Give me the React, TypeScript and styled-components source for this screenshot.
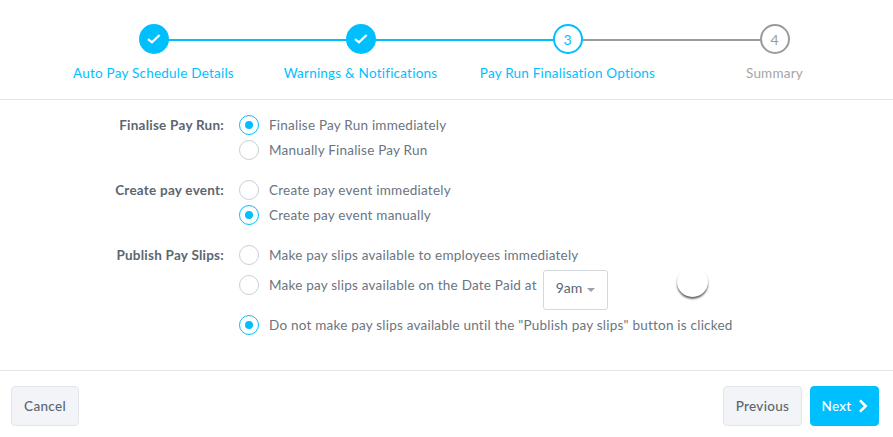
import React from 'react';
import styled, { createGlobalStyle } from 'styled-components';

const GlobalStyle = createGlobalStyle`
	html, body {
		margin: 0;
		padding: 0;
		background: #fff;
	}
	body {
		font-family: 'Lato', 'Liberation Sans', sans-serif;
		color: #6b7580;
	}
`;

const Page = styled.div`
	width: 893px;
	height: 437px;
	display: flex;
	flex-direction: column;
	overflow: hidden;
`;

const Stepper = styled.div`
	height: 100px;
	padding: 24px 0 0 50px;
	box-sizing: border-box;
	display: grid;
	grid-template-columns: repeat(4, 207px);
	border-bottom: 1px solid #e4e4e4;
`;

const Step = styled.div`
	position: relative;
	display: flex;
	flex-direction: column;
	align-items: center;
`;

const Connector = styled.div<{ $color: string }>`
	position: absolute;
	top: 15px;
	left: 50%;
	width: 100%;
	height: 2px;
	background: ${(props) => props.$color};
`;

const Circle = styled.div<{ $color: string; $filled?: boolean }>`
	position: relative;
	width: 30px;
	height: 30px;
	box-sizing: border-box;
	border-radius: 50%;
	border: 2px solid ${(props) => props.$color};
	background: ${(props) => (props.$filled ? props.$color : '#fff')};
	color: ${(props) => props.$color};
	display: flex;
	align-items: center;
	justify-content: center;
	font-size: 14px;
`;

const StepLabel = styled.div<{ $color: string }>`
	margin-top: 11px;
	font-size: 13.5px;
	line-height: 16px;
	letter-spacing: 0.22px;
	white-space: nowrap;
	color: ${(props) => props.$color};
`;

const Form = styled.div`
	flex: 1;
	padding-top: 12.5px;
	display: flex;
	flex-direction: column;
	gap: 15px;
`;

const Group = styled.div`
	display: grid;
	grid-template-columns: 224px 1fr;
	column-gap: 15px;
`;

const GroupLabel = styled.div`
	text-align: right;
	font-size: 13.5px;
	line-height: 25px;
	font-weight: 700;
	letter-spacing: 0.24px;
	color: #5c6670;
	white-space: nowrap;
`;

const Options = styled.div`
	display: flex;
	flex-direction: column;
`;

const Option = styled.div<{ $height?: number; $below?: number }>`
	position: relative;
	height: ${(props) => props.$height ?? 25}px;
	margin-bottom: ${(props) => props.$below ?? 0}px;
	display: flex;
	align-items: center;
	font-size: 13.5px;
	letter-spacing: 0.22px;
	color: #6b7580;
	white-space: nowrap;
`;

const Radio = styled.span<{ $checked?: boolean }>`
	width: 20px;
	height: 20px;
	box-sizing: border-box;
	flex: none;
	margin-right: 10px;
	border-radius: 50%;
	border: 1px solid ${(props) => (props.$checked ? '#00bfff' : '#c8d0d8')};
	display: flex;
	align-items: center;
	justify-content: center;
	&::after {
		content: '';
		display: ${(props) => (props.$checked ? 'block' : 'none')};
		width: 8px;
		height: 8px;
		border-radius: 50%;
		background: #00bfff;
	}
`;

const TimeSelect = styled.div`
	width: 65px;
	height: 40px;
	box-sizing: border-box;
	margin: 10px 0 0 6px;
	padding: 0 0 5px 12px;
	border: 1px solid #d5d9dd;
	border-radius: 3px;
	display: flex;
	align-items: center;
	gap: 5px;
	color: #5c6670;
	letter-spacing: 0;
	font-size: 14px;
`;

const Caret = styled.span`
	width: 0;
	height: 0;
	margin-top: 5px;
	border-left: 4px solid transparent;
	border-right: 4px solid transparent;
	border-top: 4px solid #9aa2aa;
`;

const Knob = styled.div`
	position: absolute;
	left: 438px;
	top: -1px;
	width: 31px;
	height: 30px;
	border-radius: 50%;
	background: #fff;
	box-shadow: 0 2px 2px rgba(0, 0, 0, 0.6);
`;

const Footer = styled.div`
	height: 67px;
	box-sizing: border-box;
	padding: 15px 14px 0 11px;
	border-top: 1px solid #e4e4e4;
	display: flex;
	align-items: flex-start;
	gap: 8px;
`;

const Spacer = styled.div`
	flex: 1;
`;

const Button = styled.button<{ $primary?: boolean; $width: number }>`
	width: ${(props) => props.$width}px;
	height: 40px;
	padding: 0;
	box-sizing: border-box;
	border-radius: 4px;
	border: 1px solid ${(props) => (props.$primary ? '#00bfff' : '#e2e5ea')};
	background: ${(props) => (props.$primary ? '#00bfff' : '#f2f4f8')};
	color: ${(props) => (props.$primary ? '#fff' : '#5c6670')};
	font-family: inherit;
	font-size: 13.5px;
	letter-spacing: 0.3px;
	font-weight: 500;
	display: flex;
	align-items: center;
	justify-content: center;
	gap: 6px;
`;

const Check = () => (
	<svg width="16" height="16" viewBox="0 0 16 16" fill="none">
		<path d="M2 8.2 L6 11.4 L13.6 4" stroke="#fff" strokeWidth="2.2" />
	</svg>
);

const Chevron = () => (
	<svg width="10" height="14" viewBox="0 0 10 14" fill="none">
		<path d="M2 1.3 L7.7 7 L2 12.7" stroke="#fff" strokeWidth="2.6" />
	</svg>
);

const BLUE = '#00bfff';
const GREY = '#9b9b9b';

const steps = [
	{ label: 'Auto Pay Schedule Details', done: true, active: true, next: BLUE },
	{ label: 'Warnings & Notifications', done: true, active: true, next: BLUE },
	{ label: 'Pay Run Finalisation Options', number: 3, active: true, next: GREY },
	{ label: 'Summary', number: 4, active: false },
];

const App: React.FC = () => {
	return (
		<Page>
			<GlobalStyle />
			<Stepper>
				{steps.map((step) => {
					const color = step.active ? BLUE : GREY;
					return (
						<Step key={step.label}>
							{step.next && <Connector $color={step.next} />}
							<Circle $color={color} $filled={step.done}>
								{step.done ? <Check /> : step.number}
							</Circle>
							<StepLabel $color={step.active ? BLUE : '#a5a5a5'}>{step.label}</StepLabel>
						</Step>
					);
				})}
			</Stepper>
			<Form>
				<Group>
					<GroupLabel>Finalise Pay Run:</GroupLabel>
					<Options>
						<Option>
							<Radio $checked />
							Finalise Pay Run immediately
						</Option>
						<Option>
							<Radio />
							Manually Finalise Pay Run
						</Option>
					</Options>
				</Group>
				<Group>
					<GroupLabel>Create pay event:</GroupLabel>
					<Options>
						<Option>
							<Radio />
							Create pay event immediately
						</Option>
						<Option>
							<Radio $checked />
							Create pay event manually
						</Option>
					</Options>
				</Group>
				<Group>
					<GroupLabel>Publish Pay Slips:</GroupLabel>
					<Options>
						<Option>
							<Radio />
							Make pay slips available to employees immediately
						</Option>
						<Option $height={35} $below={10}>
							<Radio />
							Make pay slips available on the Date Paid at
							<TimeSelect>
								9am
								<Caret />
							</TimeSelect>
							<Knob />
						</Option>
						<Option>
							<Radio $checked />
							Do not make pay slips available until the "Publish pay slips" button is clicked
						</Option>
					</Options>
				</Group>
			</Form>
			<Footer>
				<Button $width={68}>Cancel</Button>
				<Spacer />
				<Button $width={79}>Previous</Button>
				<Button $primary $width={69}>
					Next
					<Chevron />
				</Button>
			</Footer>
		</Page>
	);
};

export default App;
